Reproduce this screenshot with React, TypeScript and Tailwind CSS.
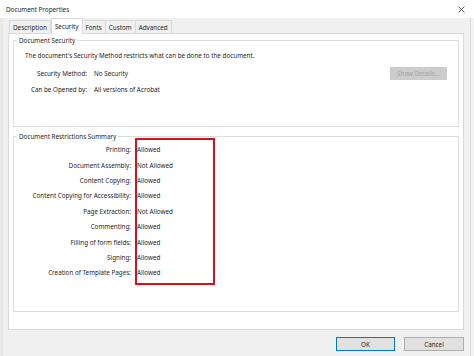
import React from "react";

const rows: [string, string][] = [
  ["Printing:", "Allowed"],
  ["Document Assembly:", "Not Allowed"],
  ["Content Copying:", "Allowed"],
  ["Content Copying for Accessibility:", "Allowed"],
  ["Page Extraction:", "Not Allowed"],
  ["Commenting:", "Allowed"],
  ["Filling of form fields:", "Allowed"],
  ["Signing:", "Allowed"],
  ["Creation of Template Pages:", "Allowed"],
];

const tabs = ["Description", "Security", "Fonts", "Custom", "Advanced"];

export default function App() {
  return (
    <div
      className="w-[474px] h-[356px] bg-[#f0f0f0] flex flex-col overflow-hidden text-[#1e1e1e] text-[6.3px] leading-[9px]"
      style={{ fontFamily: '"Noto Sans", "Open Sans", sans-serif' }}
    >
      {/* title bar */}
      <div className="h-[18px] bg-white flex items-center justify-between pl-[6px] pr-[9px] shrink-0">
        <span>Document Properties</span>
        <svg width="7" height="7" viewBox="0 0 7 7" className="text-[#333]">
          <path d="M0.5 0.5 L6.5 6.5 M6.5 0.5 L0.5 6.5" stroke="currentColor" strokeWidth="0.8" />
        </svg>
      </div>

      <div className="flex-1 flex">
        <div className="w-[3px] bg-[#e8e8e8]" />
        <div className="flex-1 flex flex-col pl-[5px] pr-[6px]">
          {/* tabs */}
          <div className="h-[15px] flex items-end pl-[1px]">
            {tabs.map((t) =>
              t === "Security" ? (
                <div
                  key={t}
                  className="h-[16px] -mb-[1px] bg-white border border-b-0 border-[#d9d9d9] px-[3px] flex items-center relative z-10"
                >
                  {t}
                </div>
              ) : (
                <div
                  key={t}
                  className="h-[13px] border border-b-0 border-[#d9d9d9] bg-[#f0f0f0] px-[3px] flex items-center -ml-[1px] first:ml-0"
                >
                  {t}
                </div>
              )
            )}
          </div>
          {/* panel */}
          <div className="h-[297px] bg-white border border-[#d9d9d9] px-[4px] pt-[2px] flex flex-col">
            <fieldset className="border border-[#dcdcdc] h-[91px] flex flex-col">
              <legend className="ml-[3px] px-[2px]">Document Security</legend>
              <div className="pl-[11px] pt-[6px]">The document's Security Method restricts what can be done to the document.</div>
              <div className="flex items-center mt-[7px] h-[13px]">
                <div className="w-[73px] text-right">Security Method:</div>
                <div className="pl-[7px] flex-1">No Security</div>
                <div className="w-[57px] h-[13px] bg-[#cccccc] text-[#a3a3a3] flex items-center justify-center mr-[11px]">
                  Show Details...
                </div>
              </div>
              <div className="flex items-center mt-[5px]">
                <div className="w-[73px] text-right">Can be Opened by:</div>
                <div className="pl-[7px]">All versions of Acrobat</div>
              </div>
            </fieldset>

            <fieldset className="border border-[#dcdcdc] mt-[5px] h-[180px]">
              <legend className="ml-[3px] px-[2px]">Document Restrictions Summary</legend>
              <div className="flex items-start gap-[4px] mt-[-1px]">
                <div className="w-[117px] flex flex-col pt-[2px]">
                  {rows.map(([l]) => (
                    <div key={l} className="h-[15.4px] flex items-center justify-end">
                      {l}
                    </div>
                  ))}
                </div>
                <div className="w-[80px] -mt-[2px] pt-[2px] border-2 border-[#d7101e] flex flex-col pb-[2px]">
                  {rows.map(([l, v]) => (
                    <div key={l} className="h-[15.4px] flex items-center">
                      {v}
                    </div>
                  ))}
                </div>
              </div>
            </fieldset>
          </div>
          {/* footer */}
          <div className="flex-1 flex items-start justify-end pt-[7px] gap-[9px]">
            <div className="w-[59px] h-[14px] bg-[#e1e1e1] border border-[#0078d7] flex items-center justify-center">OK</div>
            <div className="w-[60px] h-[14px] bg-[#e1e1e1] border border-[#adadad] flex items-center justify-center">Cancel</div>
          </div>
        </div>
        <div className="w-[1px] bg-[#dadada]" />
        <div className="w-[3px] bg-[#f4f4f4]" />
      </div>
    </div>
  );
}
